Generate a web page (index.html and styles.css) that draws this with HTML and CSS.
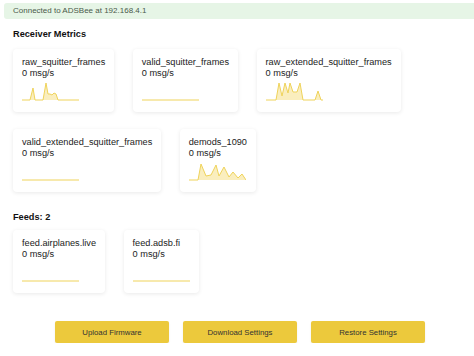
FILE: index.html
```html
<!DOCTYPE html>
<html lang="en">
<head>
    <meta charset="UTF-8">
    <meta name="viewport" content="width=device-width, initial-scale=1.0">
    <title>ADSBee</title>
    <link rel="stylesheet" href="styles.css">
</head>
<body>
    <div class="status-banner">Connected to ADSBee at 192.168.4.1</div>

    <div class="section">
        <h2 class="section-title">Receiver Metrics</h2>
        <div class="cards">
            <div class="card">
                <div class="card-name">raw_squitter_frames</div>
                <div class="card-value">0 msg/s</div>
                <svg class="spark" viewBox="0 0 57 21" width="57" height="21">
                    <polygon class="spark-fill" points="0,20 8,20 11,8 13,20 21,20 24,3 26,14 28,14 30,15 32,13 34,14 36,20 57,20"/>
                    <polyline class="spark-line" points="0,20 8,20 11,8 13,20 21,20 24,3 26,14 28,14 30,15 32,13 34,14 36,20 57,20"/>
                </svg>
            </div>
            <div class="card">
                <div class="card-name">valid_squitter_frames</div>
                <div class="card-value">0 msg/s</div>
                <svg class="spark" viewBox="0 0 57 21" width="57" height="21">
                    <polyline class="spark-line" points="0,20 57,20"/>
                </svg>
            </div>
            <div class="card">
                <div class="card-name">raw_extended_squitter_frames</div>
                <div class="card-value">0 msg/s</div>
                <svg class="spark" viewBox="0 0 57 21" width="57" height="21">
                    <polygon class="spark-fill" points="0,20 10,20 13,3 16,16 19,3 22,13 24,3 27,12 31,12 34,3 37,20 49,20 52,11 55,20 57,20"/>
                    <polyline class="spark-line" points="0,20 10,20 13,3 16,16 19,3 22,13 24,3 27,12 31,12 34,3 37,20 49,20 52,11 55,20 57,20"/>
                </svg>
            </div>
            <div class="card">
                <div class="card-name">valid_extended_squitter_frames</div>
                <div class="card-value">0 msg/s</div>
                <svg class="spark" viewBox="0 0 57 21" width="57" height="21">
                    <polyline class="spark-line" points="0,20 57,20"/>
                </svg>
            </div>
            <div class="card">
                <div class="card-name">demods_1090</div>
                <div class="card-value">0 msg/s</div>
                <svg class="spark" viewBox="0 0 57 21" width="57" height="21">
                    <polygon class="spark-fill" points="0,20 9,20 12,4 17,16 22,15 27,5 30,16 35,7 40,17 44,12 49,18 53,14 57,20"/>
                    <polyline class="spark-line" points="0,20 9,20 12,4 17,16 22,15 27,5 30,16 35,7 40,17 44,12 49,18 53,14 57,20"/>
                </svg>
            </div>
        </div>
    </div>

    <div class="section feeds">
        <h2 class="section-title">Feeds: 2</h2>
        <div class="cards">
            <div class="card">
                <div class="card-name">feed.airplanes.live</div>
                <div class="card-value">0 msg/s</div>
                <svg class="spark" viewBox="0 0 57 21" width="57" height="21">
                    <polyline class="spark-line" points="0,20 57,20"/>
                </svg>
            </div>
            <div class="card">
                <div class="card-name">feed.adsb.fi</div>
                <div class="card-value">0 msg/s</div>
                <svg class="spark" viewBox="0 0 57 21" width="57" height="21">
                    <polyline class="spark-line" points="0,20 57,20"/>
                </svg>
            </div>
        </div>
    </div>

    <div class="actions">
        <button class="action-btn">Upload Firmware</button>
        <button class="action-btn">Download Settings</button>
        <button class="action-btn">Restore Settings</button>
    </div>
</body>
</html>
```

FILE: styles.css
```css
html, body {
    margin: 0;
    padding: 0;
    overflow: hidden;
}
body {
    font-family: "Liberation Sans", Arial, sans-serif;
    background-color: #fff;
    color: #222;
}
.status-banner {
    margin: 3px 0 0 4px;
    padding: 0 9px;
    height: 16px;
    line-height: 16px;
    font-size: 8px;
    color: #4a5a4a;
    background-color: #e6f5e6;
    border-radius: 3px 0 0 3px;
}
.section {
    padding: 0 13px;
}
.section-title {
    margin: 9px 0 9px;
    font-size: 9.2px;
    line-height: 12px;
    font-weight: bold;
    color: #111;
}
.feeds .section-title {
    margin: 19px 0 7px;
}
.cards {
    display: flex;
    flex-wrap: wrap;
    align-items: flex-start;
    column-gap: 18.5px;
    row-gap: 17px;
}
.card {
    padding: 8px 9px 11px;
    background-color: #fff;
    border-radius: 4px;
    box-shadow: 0 1px 4px rgba(0, 0, 0, 0.09);
}
.card-name,
.card-value {
    font-size: 9.2px;
    line-height: 11px;
    white-space: nowrap;
}
.spark {
    display: block;
    margin-top: 1px;
}
.spark-fill {
    fill: rgba(240, 206, 70, 0.35);
    stroke: none;
}
.spark-line {
    fill: none;
    stroke: #efd35a;
    stroke-width: 1;
    stroke-linejoin: round;
}
.actions {
    display: flex;
    justify-content: center;
    gap: 14px;
    margin-top: 28px;
    padding-left: 6px;
}
.action-btn {
    width: 114px;
    height: 22px;
    border: none;
    border-radius: 2px;
    background-color: #ecc93c;
    color: #333;
    font-family: "Liberation Sans", Arial, sans-serif;
    font-size: 7.8px;
    cursor: pointer;
    box-shadow: 0 1px 2px rgba(0, 0, 0, 0.08);
}
```
